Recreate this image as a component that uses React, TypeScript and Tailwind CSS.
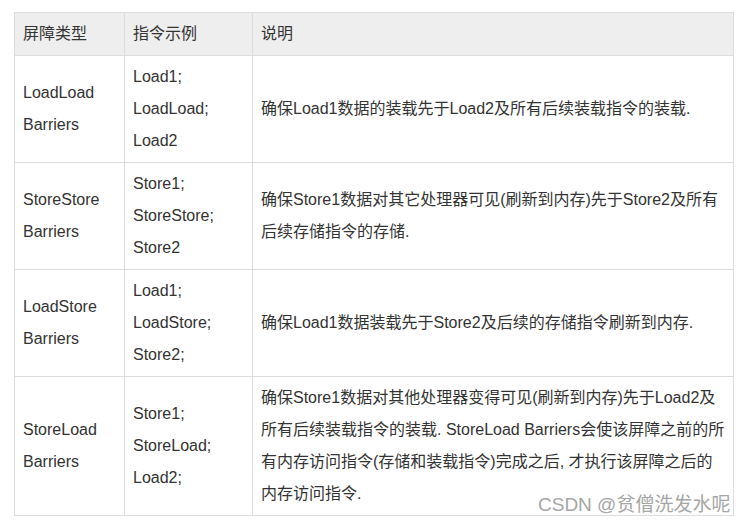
const rows = [
  {
    type: ["LoadLoad", "Barriers"],
    code: ["Load1;", "LoadLoad;", "Load2"],
    desc: "确保Load1数据的装载先于Load2及所有后续装载指令的装载.",
  },
  {
    type: ["StoreStore", "Barriers"],
    code: ["Store1;", "StoreStore;", "Store2"],
    desc: "确保Store1数据对其它处理器可见(刷新到内存)先于Store2及所有后续存储指令的存储.",
  },
  {
    type: ["LoadStore", "Barriers"],
    code: ["Load1;", "LoadStore;", "Store2;"],
    desc: "确保Load1数据装载先于Store2及后续的存储指令刷新到内存.",
  },
  {
    type: ["StoreLoad", "Barriers"],
    code: ["Store1;", "StoreLoad;", "Load2;"],
    desc: "确保Store1数据对其他处理器变得可见(刷新到内存)先于Load2及所有后续装载指令的装载. StoreLoad Barriers会使该屏障之前的所有内存访问指令(存储和装载指令)完成之后, 才执行该屏障之后的内存访问指令.",
  },
];

const font = "font-['Liberation_Sans','Noto_Sans_CJK_SC',sans-serif]";

export default function App() {
  return (
    <div className={`relative w-[744px] h-[526px] bg-white pt-3 pl-[14px] ${font} text-[16px] leading-8 text-[#333]`}>
      <table className="w-[720px] border-collapse table-fixed">
        <colgroup>
          <col className="w-[110px]" />
          <col className="w-[128px]" />
          <col />
        </colgroup>
        <thead>
          <tr className="bg-[#eee]">
            <th className="border border-[#ddd] px-2 py-[5px] text-left font-normal">屏障类型</th>
            <th className="border border-[#ddd] px-2 py-[5px] text-left font-normal">指令示例</th>
            <th className="border border-[#ddd] px-2 py-[5px] text-left font-normal">说明</th>
          </tr>
        </thead>
        <tbody>
          {rows.map((r) => (
            <tr key={r.code[1]}>
              <td className="border border-[#ddd] px-2 py-[5px] align-middle">
                {r.type.map((t) => (
                  <div key={t}>{t}</div>
                ))}
              </td>
              <td className="border border-[#ddd] px-2 py-[5px] align-middle">
                {r.code.map((c) => (
                  <div key={c}>{c}</div>
                ))}
              </td>
              <td className="border border-[#ddd] px-2 py-[5px] align-middle">{r.desc}</td>
            </tr>
          ))}
        </tbody>
      </table>
      <div className="absolute left-[538px] top-[493px] text-[19px] leading-6 text-[#a6a6a6] whitespace-nowrap">
        CSDN @贫僧洗发水呢
      </div>
    </div>
  );
}
